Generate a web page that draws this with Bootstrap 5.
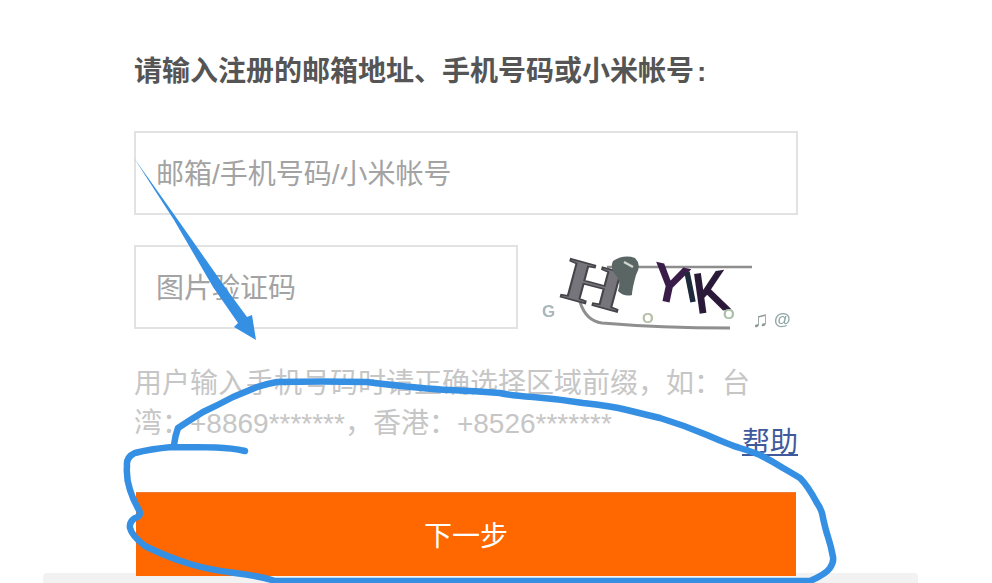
<!DOCTYPE html>
<html lang="zh-CN">
<head>
<meta charset="utf-8">
<title>找回密码</title>
<link href="https://cdn.jsdelivr.net/npm/bootstrap@5.3.0/dist/css/bootstrap.min.css" rel="stylesheet">
<style>
html,body{height:583px;overflow:hidden;background:#fff;}
body{font-family:"Liberation Sans","Noto Sans CJK SC",sans-serif;font-size:28px;position:relative;}
.pg-wrap{width:664px;margin-left:134px;padding-top:52px;}
.pg-title{font-size:28px;line-height:40px;font-weight:700;color:#555;margin:0 0 39px;}
.pg-title span{margin-left:3px;}
.pg-input.form-control{height:84px;border:2px solid #e2e2e2;border-radius:0;font-size:28px;padding:4px 20px 0;color:#333;box-shadow:none;font-family:inherit;}
.pg-input.form-control::placeholder{color:#a3a3a3;opacity:1;}
.pg-row{gap:22px;margin-top:30px;}
.pg-half{width:384px;flex:none;}
.pg-cap{width:255px;height:85px;display:block;flex:none;overflow:visible;}
.pg-hint{color:#c6c6c6;line-height:40px;width:625px;margin:34px 0 0;}
.pg-help{color:#3f5a9c;line-height:40px;margin-top:-21px;text-align:right;}
.pg-help a{color:inherit;}
.pg-btn.btn{display:block;width:660px;height:84px;margin:29px 0 0 2px;padding:4px 0 0;border-radius:0;border:0;border-top:1px solid #ee7b33;background:#ff6700;color:#fff;font-size:28px;position:relative;z-index:1;}
.pg-foot{width:875px;height:20px;margin:-3px 0 0 43px;background:#f2f2f2;border-radius:4px 4px 0 0;}
.pg-ink{position:absolute;left:0;top:0;width:992px;height:583px;z-index:5;pointer-events:none;}
</style>
</head>
<body>
<div class="pg-wrap">
  <h1 class="pg-title">请输入注册的邮箱地址、手机号码或小米帐号<span>:</span></h1>
  <input class="form-control pg-input" type="text" placeholder="邮箱/手机号码/小米帐号">
  <div class="d-flex align-items-start pg-row">
    <input class="form-control pg-input pg-half" type="text" placeholder="图片验证码">
    <svg class="pg-cap" viewBox="0 0 255 85" xmlns="http://www.w3.org/2000/svg" role="img" aria-label="验证码">
      <defs><filter id="soft"><feGaussianBlur stdDeviation="0.7"/></filter></defs>
      <g filter="url(#soft)">
        <path d="M67 22H212" stroke="#8d8d8d" stroke-width="2.5" fill="none"/>
        <path d="M40 57Q46 76 62 78Q120 83 190 83" stroke="#8f8f8f" stroke-width="3" fill="none"/>
        <text transform="translate(54 40) rotate(15) scale(1.3 1)" text-anchor="middle" y="20" font-family="Liberation Serif,serif" font-weight="700" font-size="60" fill="#77757b" stroke="#45444a" stroke-width="1.6">H</text>
        <path d="M73 16Q84 9 95 13Q102 20 96 30Q92 44 92 50Q84 52 78 46Q82 36 74 28Q70 22 73 16Z" fill="#5a6663"/>
        <path d="M84 17l9 5" stroke="#cfd6cf" stroke-width="2.5"/>
        <text transform="translate(131 34) rotate(12)" text-anchor="middle" y="22" font-family="Liberation Sans,sans-serif" font-size="50" fill="#3a1f49" stroke="#3a1f49" stroke-width="2.6">Y</text>
        <path d="M147 27L153 57" stroke="#1f2b3b" stroke-width="5.5" fill="none"/>
        <text transform="translate(170 44) rotate(-8) scale(1 1.1)" text-anchor="middle" y="20" font-family="Liberation Sans,sans-serif" font-size="50" fill="#2c1a38" stroke="#2c1a38" stroke-width="2.2">K</text>
        <g font-family="Liberation Sans,sans-serif">
          <text x="2" y="72" font-size="17" font-weight="700" fill="#a9b6bb">G</text>
          <text x="102" y="78" font-size="15" font-weight="700" fill="#b6c0a8">O</text>
          <text x="183" y="74" font-size="15" font-weight="700" fill="#a9c0a8">O</text>
          <text x="212" y="82" font-size="22" fill="#8f9a94">♫</text>
          <text x="234" y="80" font-size="17" font-weight="700" fill="#8fa8a4">@</text>
        </g>
      </g>
    </svg>
  </div>
  <p class="pg-hint">用户输入手机号码时请正确选择区域前缀&#xFF0C;如&#xFF1A;台湾&#xFF1A;+8869*******&#xFF0C;香港&#xFF1A;+8526*******</p>
  <div class="pg-help"><a href="#">帮助</a></div>
  <button class="btn pg-btn" type="button">下一步</button>
</div>
<div class="pg-foot"></div>
<svg class="pg-ink" viewBox="0 0 992 583" xmlns="http://www.w3.org/2000/svg" aria-hidden="true">
  <polygon points="134,158 178,220 225,287 247,317 252,315 256,340 234,327 238,323 213,287 174,220" fill="#3590e3"/>
  <path d="M245 451Q232 448 216 447.5T172 447Q150 449 135 453Q126 457 127 466Q126 478 130 490T139 510Q142 516 135 518Q129 522 130 528Q132 536 145 546Q167 557 190 564Q210 570 235 573T275 581H810Q826 574 830 568T833 557Q831 546 828 537T822 513Q820 507 817 503Q808 486 800 478Q790 472 783 468Q772 461 760 455Q750 451 740 448T707 435Q683 425 660 418Q643 414 627 410T583 403Q558 399 533 397T500 393Q475 391 450 390T367 382Q322 381 277 382Q266 384 257 387Q245 392 233 397Q218 405 203 412Q190 420 178 428Q175 436 174 445" fill="none" stroke="#3590e3" stroke-width="6.5" stroke-linecap="round" stroke-linejoin="round"/>
</svg>
</body>
</html>
